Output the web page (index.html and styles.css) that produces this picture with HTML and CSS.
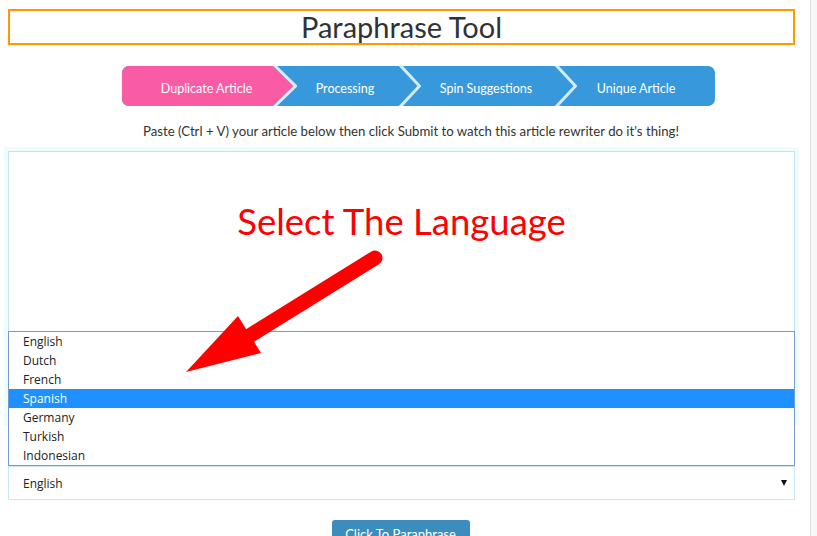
FILE: index.html
```html
<!DOCTYPE html>
<html lang="en">
<head>
<meta charset="utf-8">
<title>Paraphrase Tool</title>
<link rel="stylesheet" href="styles.css">
</head>
<body>
<div class="page">
  <main class="main">
    <h1 class="title">Paraphrase Tool</h1>

    <div class="steps">
      <div class="step step-1">Duplicate Article</div>
      <svg class="sep" width="24" height="40" viewBox="0 0 24 40" aria-hidden="true">
        <polygon points="-1,0 21,20 -1,40" fill="#f95ba4"/>
        <polyline points="0,-2 22.5,20 0,42" fill="none" stroke="#d3ecfa" stroke-width="3"/>
      </svg>
      <div class="step step-2">Processing</div>
      <svg class="sep" width="22" height="40" viewBox="0 0 22 40" aria-hidden="true">
        <polyline points="0,-2 20.5,20 0,42" fill="none" stroke="#d3ecfa" stroke-width="3"/>
      </svg>
      <div class="step step-3">Spin Suggestions</div>
      <svg class="sep" width="22" height="40" viewBox="0 0 22 40" aria-hidden="true">
        <polyline points="0,-2 20.5,20 0,42" fill="none" stroke="#d3ecfa" stroke-width="3"/>
      </svg>
      <div class="step step-4">Unique Article</div>
    </div>

    <p class="hint">Paste (Ctrl + V) your article below then click Submit to watch this article rewriter do it's thing!</p>

    <div class="editor">
      <div class="textarea"></div>
      <div class="select">
        <span>English</span>
        <span class="caret"></span>
      </div>

      <div class="annotation">Select The Language</div>
      <svg class="arrow" width="210" height="130" viewBox="0 0 210 130" aria-hidden="true">
        <line x1="197" y1="8" x2="68" y2="88" stroke="#ff0000" stroke-width="15" stroke-linecap="round"/>
        <polygon points="60,66 83,103 8,122" fill="#ff0000"/>
      </svg>

      <ul class="listbox">
        <li>English</li>
        <li>Dutch</li>
        <li>French</li>
        <li class="selected">Spanish</li>
        <li>Germany</li>
        <li>Turkish</li>
        <li>Indonesian</li>
      </ul>
    </div>

    <div class="actions">
      <button class="btn" type="button">Click To Paraphrase</button>
    </div>
  </main>
  <div class="scrollbar"></div>
</div>
</body>
</html>
```

FILE: styles.css
```css
html, body {
  margin: 0;
  padding: 0;
  background: #ffffff;
  height: 100%;
  overflow: hidden;
}

.page {
  display: flex;
  height: 100%;
}

.main {
  width: 787px;
  padding: 9px 15px 0 8px;
  font-family: Lato, "Open Sans", sans-serif;
  color: #333;
}

.title {
  margin: 0;
  height: 32px;
  border: 2px solid #ff9900;
  text-align: center;
  font-weight: 400;
  font-size: 29px;
  line-height: 32px;
  color: #2f3237;
}

.steps {
  display: flex;
  width: 593px;
  height: 40px;
  margin: 21px 0 0 114px;
  background: #3799dc;
  border-radius: 7px;
  overflow: hidden;
}

.step {
  box-sizing: border-box;
  height: 40px;
  line-height: 46px;
  text-align: center;
  color: #ffffff;
  font-size: 12.5px;
  white-space: nowrap;
}

.step-1 {
  width: 151px;
  padding-left: 18px;
  background: #f95ba4;
}

.step-2 {
  width: 102px;
  padding-right: 6px;
}

.step-3 {
  width: 134px;
  padding-right: 4px;
}

.step-4 {
  width: 138px;
  padding-right: 20px;
}

.sep {
  flex: none;
  display: block;
}

.hint {
  margin: 0;
  height: 45px;
  padding-left: 19px;
  line-height: 50px;
  text-align: center;
  font-size: 13.2px;
  color: #333;
}

.editor {
  position: relative;
}

.textarea {
  height: 268px;
  border: 1px solid #c3e6f2;
  box-shadow: 0 0 0 4px #effbfd;
  background: #ffffff;
}

.select {
  display: flex;
  align-items: center;
  justify-content: space-between;
  box-sizing: border-box;
  height: 34px;
  margin-top: 45px;
  padding: 0 7px 0 14px;
  border: 1px solid #c8e7f1;
  font-family: "Open Sans", sans-serif;
  font-size: 12px;
  color: #222;
}

.caret {
  width: 0;
  height: 0;
  border-left: 3.5px solid transparent;
  border-right: 3.5px solid transparent;
  border-top: 6px solid #111;
}

.annotation {
  position: absolute;
  left: 0;
  right: 0;
  top: 49px;
  text-align: center;
  font-family: Lato, sans-serif;
  font-size: 36.5px;
  line-height: 42px;
  color: #ff0000;
}

.arrow {
  position: absolute;
  left: 170px;
  top: 99px;
  z-index: 2;
}

.listbox {
  position: absolute;
  left: 0;
  top: 180px;
  width: 785px;
  margin: 0;
  padding: 0;
  list-style: none;
  border: 1px solid #7499d6;
  background: #ffffff;
  font-family: "Open Sans", sans-serif;
  font-size: 12px;
  color: #222;
  z-index: 1;
}

.listbox li {
  height: 19px;
  line-height: 19px;
  padding-left: 14px;
}

.listbox li.selected {
  background: #1e90ff;
  color: #ffffff;
}

.actions {
  display: flex;
  justify-content: center;
  margin-top: 20px;
  padding-right: 3px;
}

.btn {
  box-sizing: border-box;
  width: 138px;
  height: 36px;
  margin-left: 1px;
  border: 0;
  border-radius: 3px;
  background: #3c8dbc;
  color: #ffffff;
  font-family: Lato, sans-serif;
  font-size: 13px;
  padding: 0 0 8px 0;
  line-height: 18px;
}

.scrollbar {
  flex: none;
  width: 6px;
  height: 100%;
  border-left: 1px solid #e0e0e0;
  background: #f7f7f7;
}
```
